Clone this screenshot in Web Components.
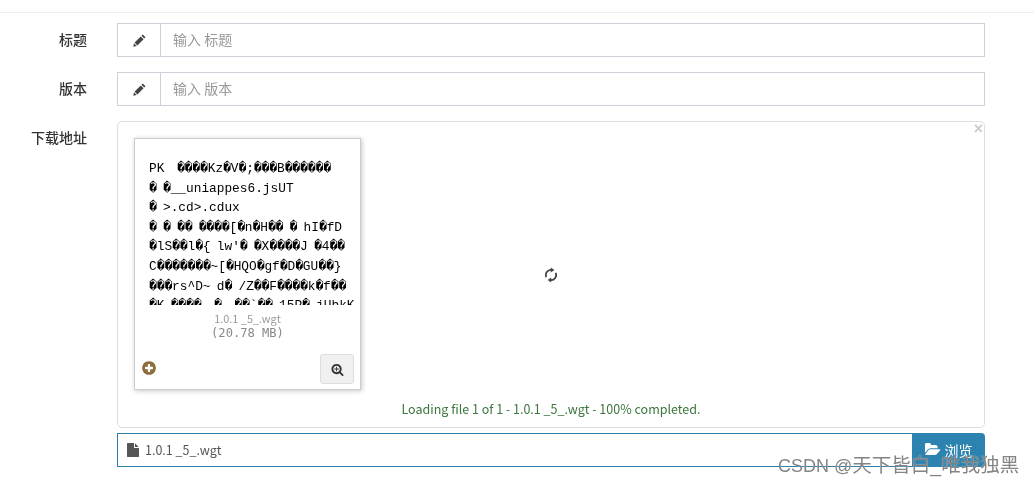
<!DOCTYPE html>
<html lang="zh">
<head>
<meta charset="utf-8">
<title>上传</title>
<style>
html, body {
  margin: 0;
  height: 484px;
  overflow: hidden;
  background: #fff;
  font: 14px/20px "Noto Sans CJK SC", "Noto Sans", sans-serif;
  color: #333;
}
</style>
</head>
<body>
<upload-page>
  <form-row label="标题"><icon-input placeholder="输入 标题"></icon-input></form-row>
  <form-row label="版本"><icon-input placeholder="输入 版本"></icon-input></form-row>
  <form-row label="下载地址">
    <preview-box status="Loading file 1 of 1 - 1.0.1 _5_.wgt - 100% completed.">
      <thumb-card name="1.0.1 _5_.wgt" size="(20.78 MB)"></thumb-card>
    </preview-box>
    <file-caption name="1.0.1 _5_.wgt" button="浏览"></file-caption>
  </form-row>
</upload-page>
<water-mark>CSDN @<span>天下皆白_唯我独黑</span></water-mark>

<script>
var ICONS = {
  pencil: `<svg viewBox="0 0 16 16" width="13" height="13"><path fill="currentColor" d="M12 .6l3.400 3.400-1.600 1.600-3.400-3.400zM9.600 3l3.400 3.400-7.600 7.600-3.400-3.400zM1.200 11.400l3.400 3.400-4.200 1z"/></svg>`,
  file: `<svg viewBox="0 0 1792 1792" width="14" height="14"><path fill="currentColor" d="M1152 512v-472q22 14 36 28l408 408q14 14 28 36h-472zm-128 32q0 40 28 68t68 28h544v1056q0 40-28 68t-68 28h-1344q-40 0-68-28t-28-68v-1600q0-40 28-68t68-28h800v544z"/></svg>`,
  folder: `<svg viewBox="0 0 1920 1792" width="16" height="15"><path fill="currentColor" d="M1845 931q0 35-53 93l-336 396q-43 51-120.500 86.500t-143.500 35.500h-1088q-34 0-60.500-13t-26.500-43q0-35 53-93l336-396q43-51 120.500-86.500t143.500-35.500h1088q34 0 60.500 13t26.500 43zm-343-344v160h-832q-94 0-197 47.500t-164 119.500l-337 396-5 6q0-4-.5-12.500t-.5-12.500v-960q0-92 66-158t158-66h320q92 0 158 66t66 158v32h544q92 0 158 66t66 158z"/></svg>`,
  refresh: `<svg viewBox="0 0 12 16" width="12" height="16"><path fill="none" stroke="currentColor" stroke-width="1.800" d="M1.400 10.200A5 5 0 0 1 6.500 3M10.600 5.800A5 5 0 0 1 5.500 13"/><path fill="currentColor" d="M5.800 .4L9.400 3 5.800 5.600zM6.200 10.400L2.600 13l3.600 2.600z"/></svg>`,
  plus: `<svg viewBox="0 0 1792 1792" width="16" height="16"><path fill="currentColor" d="M1344 960v-128q0-26-19-45t-45-19h-256v-256q0-26-19-45t-45-19h-128q-26 0-45 19t-19 45v256h-256q-26 0-45 19t-19 45v128q0 26 19 45t45 19h256v256q0 26 19 45t45 19h128q26 0 45-19t19-45v-256h256q26 0 45-19t19-45zm320-64q0 209-103 385.500t-279.500 279.500-385.500 103-385.500-103-279.500-279.500-103-385.500 103-385.500 279.500-279.500 385.500-103 385.500 103 279.500 279.500 103 385.500z"/></svg>`,
  zoom: `<svg viewBox="0 0 1792 1792" width="13" height="13"><path fill="currentColor" d="M1088 800v64q0 13-9.500 22.500t-22.500 9.500h-224v224q0 13-9.500 22.500t-22.500 9.500h-64q-13 0-22.500-9.500t-9.500-22.500v-224h-224q-13 0-22.500-9.500t-9.500-22.500v-64q0-13 9.500-22.500t22.500-9.500h224v-224q0-13 9.500-22.500t22.500-9.500h64q13 0 22.500 9.500t9.500 22.500v224h224q13 0 22.500 9.500t9.500 22.500zm128 32q0-185-131.500-316.500t-316.500-131.500-316.500 131.500-131.500 316.500 131.500 316.500 316.500 131.500 316.500-131.500 131.500-316.500zm512 832q0 53-37.500 90.500t-90.500 37.500q-54 0-90-38l-343-342q-179 124-399 124-143 0-273.500-55.500t-225-150-150-225-55.500-273.500 55.500-273.500 150-225 225-150 273.500-55.500 273.500 55.500 225 150 150 225 55.500 273.500q0 220-124 399l343 343q37 37 37 90z"/></svg>`
};

var DUMP = [
  "PK  ����Kz�V�;���B������",
  "� �__uniappes6.jsUT",
  "� >.cd>.cdux",
  "� � �� ����[�n�H�� � hI�fD",
  "�lS��l�{ lw'� �X����J �4��",
  "C�������~[�HQO�gf�D�GU��}",
  "���rs^D~ d� /Z��F����k�f��",
  "�K ����  �  ��`�� 15P� jUbkK"
].join("\n");

class UploadPage extends HTMLElement {
  constructor() {
    super();
    this.attachShadow({ mode: "open" });
    this.shadowRoot.innerHTML = `
      <style>
        :host {
          display: flex;
          flex-direction: column;
          gap: 15px;
          margin-top: 12px;
          padding: 10px 49px 0 0;
          border-top: 1px solid #eee;
          will-change: transform;
        }
      </style>
      <slot></slot>
    `;
  }
}

class FormRow extends HTMLElement {
  constructor() {
    super();
    this.attachShadow({ mode: "open" });
    this.shadowRoot.innerHTML = `
      <style>
        :host {
          display: grid;
          grid-template-columns: 87px 1fr;
          column-gap: 30px;
        }
        label {
          text-align: right;
          font-weight: 500;
          padding-top: 6px;
          color: #333;
        }
        .field {
          display: flex;
          flex-direction: column;
          min-width: 0;
        }
      </style>
      <label>${this.getAttribute("label")}</label>
      <div class="field"><slot></slot></div>
    `;
  }
}

class IconInput extends HTMLElement {
  constructor() {
    super();
    this.attachShadow({ mode: "open" });
    this.shadowRoot.innerHTML = `
      <style>
        :host {
          display: flex;
          height: 34px;
          box-sizing: border-box;
          border: 1px solid #ccd0d9;
        }
        .addon {
          width: 42px;
          display: flex;
          align-items: center;
          justify-content: center;
          border-right: 1px solid #ccd0d9;
          color: #444;
        }
        .text {
          padding-left: 12px;
          line-height: 30px;
          color: #999;
        }
      </style>
      <div class="addon">${ICONS.pencil}</div>
      <div class="text">${this.getAttribute("placeholder")}</div>
    `;
  }
}

class PreviewBox extends HTMLElement {
  constructor() {
    super();
    this.attachShadow({ mode: "open" });
    this.shadowRoot.innerHTML = `
      <style>
        :host {
          display: flex;
          flex-direction: column;
          position: relative;
          height: 307px;
          box-sizing: border-box;
          border: 1px solid #ddd;
          border-radius: 5px;
          padding: 16px 16px 0 16px;
        }
        .cards { flex: 1; }
        .close {
          position: absolute;
          top: 0;
          right: 1px;
          font: bold 16px/13px "Liberation Sans", sans-serif;
          color: #ccc;
        }
        .spin {
          position: absolute;
          left: 427px;
          top: 145px;
          color: #444;
        }
        .status {
          height: 27px;
          text-align: center;
          font-size: 12.5px;
          line-height: 18px;
          color: #3c763d;
        }
      </style>
      <span class="close">×</span>
      <span class="spin">${ICONS.refresh}</span>
      <div class="cards"><slot></slot></div>
      <div class="status">${this.getAttribute("status")}</div>
    `;
  }
}

class ThumbCard extends HTMLElement {
  constructor() {
    super();
    this.attachShadow({ mode: "open" });
    this.shadowRoot.innerHTML = `
      <style>
        :host {
          display: flex;
          flex-direction: column;
          width: 227px;
          height: 252px;
          box-sizing: border-box;
          border: 1px solid #ccc;
          box-shadow: 1px 1px 5px 0 rgba(0, 0, 0, .22);
          padding: 20px 6px 5px 14px;
        }
        pre {
          margin: 0;
          height: 146px;
          overflow: hidden;
          font: 12.8px/19.6px "Liberation Mono", monospace;
          word-spacing: -1.4px;
          color: #000;
        }
        .name {
          margin-top: 6px;
          margin-right: 8px;
          text-align: center;
          font-size: 10.9px;
          line-height: 15px;
          color: #999;
        }
        .size {
          margin-right: 8px;
          text-align: center;
          font: 12.1px/14px "DejaVu Sans Mono", monospace;
          color: #888;
        }
        .foot {
          margin-top: auto;
          display: flex;
          justify-content: space-between;
          align-items: center;
          margin-left: -8px;
        }
        .add { color: #8a6d3b; display: flex; margin-bottom: 2px; }
        button {
          width: 34px;
          height: 30px;
          padding: 0;
          display: flex;
          align-items: center;
          justify-content: center;
          background: #f0f0f0;
          border: 1px solid #ddd;
          border-radius: 3px;
          color: #333;
        }
      </style>
      <pre>${DUMP}</pre>
      <div class="name">${this.getAttribute("name")}</div>
      <div class="size">${this.getAttribute("size")}</div>
      <div class="foot">
        <span class="add">${ICONS.plus}</span>
        <button type="button">${ICONS.zoom}</button>
      </div>
    `;
  }
}

class FileCaption extends HTMLElement {
  constructor() {
    super();
    this.attachShadow({ mode: "open" });
    this.shadowRoot.innerHTML = `
      <style>
        :host {
          display: flex;
          height: 34px;
          margin-top: 5px;
        }
        .name {
          flex: 1;
          display: flex;
          align-items: center;
          gap: 5px;
          box-sizing: border-box;
          padding-left: 8px;
          border: 1px solid #2e7eaa;
          border-right: 0;
          font-size: 12.5px;
          color: #555;
        }
        .browse {
          width: 73px;
          box-sizing: border-box;
          padding-bottom: 1px;
          display: flex;
          align-items: center;
          justify-content: center;
          gap: 4px;
          background: #2d83b0;
          border-radius: 0 4px 4px 0;
          color: #fff;
        }
      </style>
      <div class="name">${ICONS.file}<span>${this.getAttribute("name")}</span></div>
      <div class="browse">${ICONS.folder}<span>${this.getAttribute("button")}</span></div>
    `;
  }
}

class WaterMark extends HTMLElement {
  constructor() {
    super();
    this.attachShadow({ mode: "open" });
    this.shadowRoot.innerHTML = `
      <style>
        :host {
          position: absolute;
          left: 778px;
          top: 453px;
          font: 18px/24px "Liberation Sans", "Noto Sans CJK SC", sans-serif;
          color: rgba(110, 110, 110, .85);
          text-shadow: 0 0 1px rgba(255, 255, 255, .8);
          white-space: nowrap;
        }
        ::slotted(span) { font-size: 19.5px; }
      </style>
      <slot></slot>
    `;
  }
}

customElements.define("upload-page", UploadPage);
customElements.define("form-row", FormRow);
customElements.define("icon-input", IconInput);
customElements.define("preview-box", PreviewBox);
customElements.define("thumb-card", ThumbCard);
customElements.define("file-caption", FileCaption);
customElements.define("water-mark", WaterMark);
</script>
</body>
</html>
